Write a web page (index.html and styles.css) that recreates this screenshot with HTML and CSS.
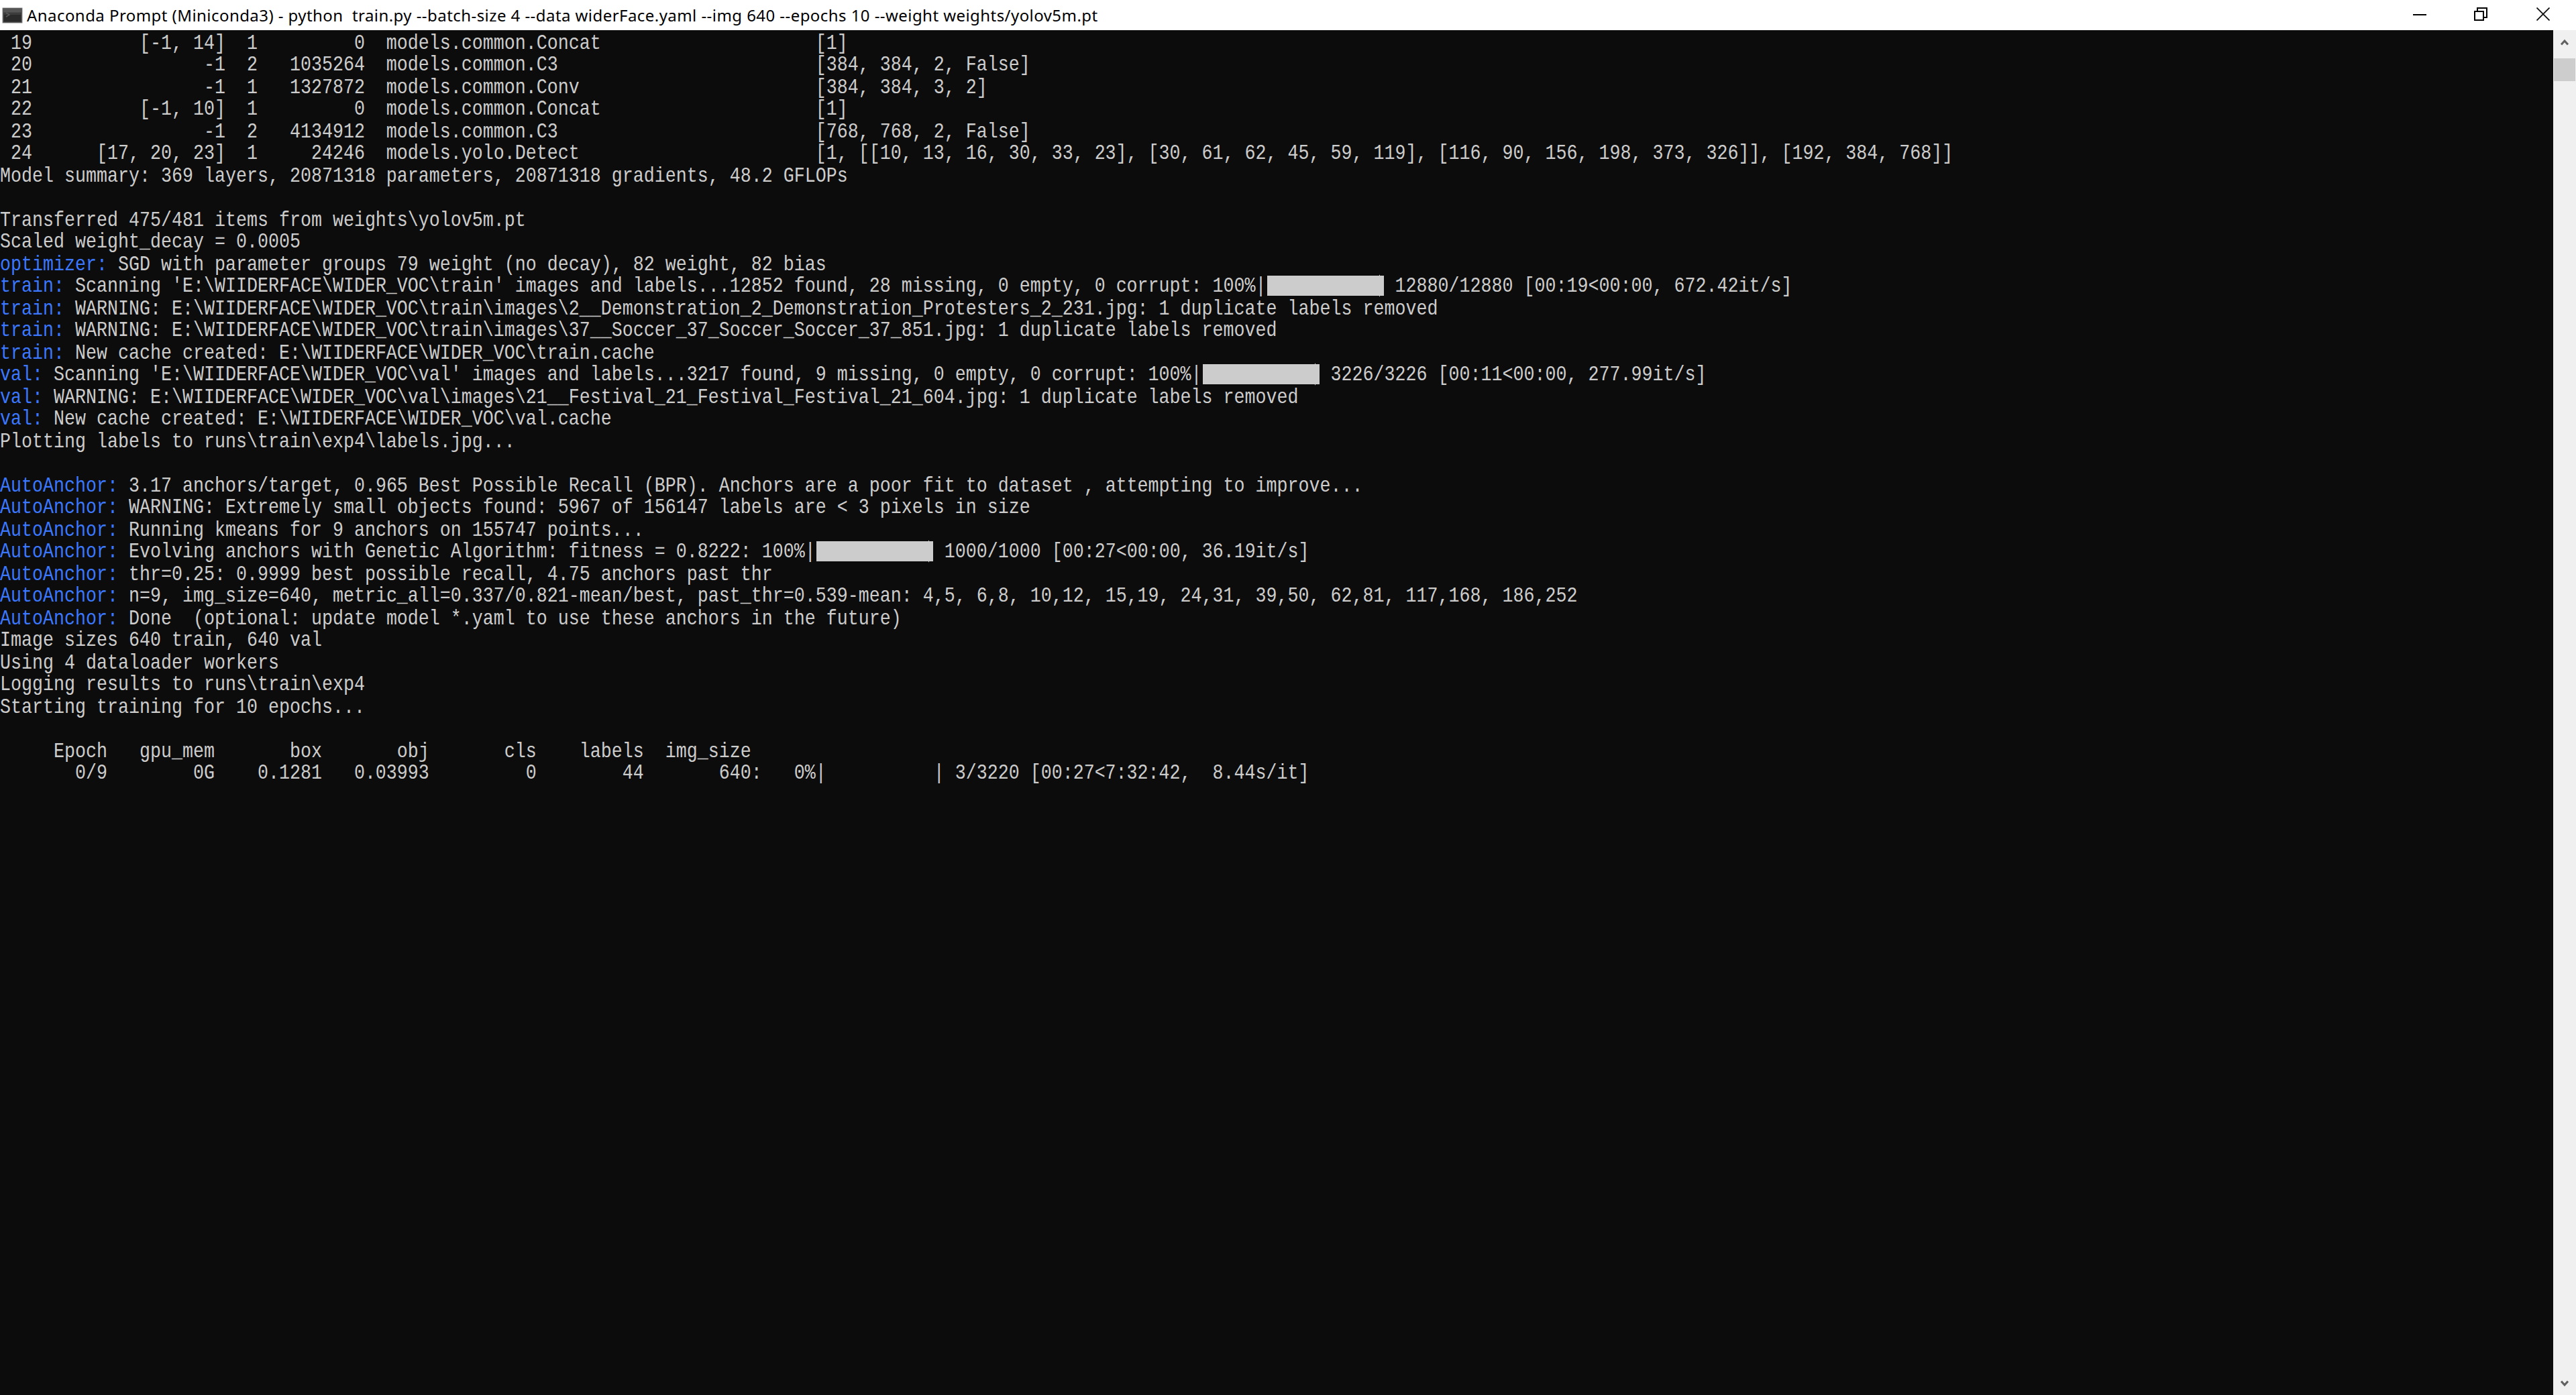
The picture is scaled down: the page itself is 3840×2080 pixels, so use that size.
FILE: index.html
```html
<!DOCTYPE html>
<html lang="en">
<head>
<meta charset="utf-8">
<title>Anaconda Prompt (Miniconda3)</title>
<link rel="stylesheet" href="styles.css">
</head>
<body>
<div class="window">
  <header class="titlebar">
    <svg class="app-icon" viewBox="0 0 31 24" aria-hidden="true">
      <rect x="0.5" y="0.5" width="30" height="23" fill="#8a8a8a"/>
      <rect x="1.5" y="1.5" width="28" height="21" fill="#3c3c3c"/>
      <rect x="1.5" y="1.5" width="28" height="6" fill="#565656"/>
      <rect x="3" y="11" width="25" height="10" fill="#2a2a2a"/>
      <path d="M6 8l5 3-5 3" fill="none" stroke="#5a5a5a" stroke-width="1.5"/>
    </svg>
    <span class="title">Anaconda Prompt (Miniconda3) - python  train.py --batch-size 4 --data widerFace.yaml --img 640 --epochs 10 --weight weights/yolov5m.pt</span>
    <div class="controls">
      <div class="ctl ctl-min"><svg class="ctl-icon" viewBox="0 0 20 20" aria-hidden="true"><path d="M0 11H20" stroke="#000" stroke-width="2"/></svg></div>
      <div class="ctl ctl-max"><svg class="ctl-icon" viewBox="0 0 20 20" aria-hidden="true"><rect x="1" y="6" width="13" height="13" fill="none" stroke="#000" stroke-width="2"/><path d="M5 5V1H19V15H15" fill="none" stroke="#000" stroke-width="2"/></svg></div>
      <div class="ctl ctl-close"><svg class="ctl-icon" viewBox="0 0 20 20" aria-hidden="true"><path d="M0.5 0.5L19.5 19.5M19.5 0.5L0.5 19.5" stroke="#111" stroke-width="1.8"/></svg></div>
    </div>
  </header>
  <div class="body">
    <main class="terminal">
      <div class="screen">
<div class="line"> 19          [-1, 14]  1         0  models.common.Concat                    [1]</div>
<div class="line"> 20                -1  2   1035264  models.common.C3                        [384, 384, 2, False]</div>
<div class="line"> 21                -1  1   1327872  models.common.Conv                      [384, 384, 3, 2]</div>
<div class="line"> 22          [-1, 10]  1         0  models.common.Concat                    [1]</div>
<div class="line"> 23                -1  2   4134912  models.common.C3                        [768, 768, 2, False]</div>
<div class="line"> 24      [17, 20, 23]  1     24246  models.yolo.Detect                      [1, [[10, 13, 16, 30, 33, 23], [30, 61, 62, 45, 59, 119], [116, 90, 156, 198, 373, 326]], [192, 384, 768]]</div>
<div class="line">Model summary: 369 layers, 20871318 parameters, 20871318 gradients, 48.2 GFLOPs</div>
<div class="line"> </div>
<div class="line">Transferred 475/481 items from weights\yolov5m.pt</div>
<div class="line">Scaled weight_decay = 0.0005</div>
<div class="line"><span class="tag">optimizer:</span> SGD with parameter groups 79 weight (no decay), 82 weight, 82 bias</div>
<div class="line"><span class="tag">train:</span> Scanning 'E:\WIIDERFACE\WIDER_VOC\train' images and labels...12852 found, 28 missing, 0 empty, 0 corrupt: 100%|<span class="bar"></span> 12880/12880 [00:19&lt;00:00, 672.42it/s]</div>
<div class="line"><span class="tag">train:</span> WARNING: E:\WIIDERFACE\WIDER_VOC\train\images\2__Demonstration_2_Demonstration_Protesters_2_231.jpg: 1 duplicate labels removed</div>
<div class="line"><span class="tag">train:</span> WARNING: E:\WIIDERFACE\WIDER_VOC\train\images\37__Soccer_37_Soccer_Soccer_37_851.jpg: 1 duplicate labels removed</div>
<div class="line"><span class="tag">train:</span> New cache created: E:\WIIDERFACE\WIDER_VOC\train.cache</div>
<div class="line"><span class="tag">val:</span> Scanning 'E:\WIIDERFACE\WIDER_VOC\val' images and labels...3217 found, 9 missing, 0 empty, 0 corrupt: 100%|<span class="bar"></span> 3226/3226 [00:11&lt;00:00, 277.99it/s]</div>
<div class="line"><span class="tag">val:</span> WARNING: E:\WIIDERFACE\WIDER_VOC\val\images\21__Festival_21_Festival_Festival_21_604.jpg: 1 duplicate labels removed</div>
<div class="line"><span class="tag">val:</span> New cache created: E:\WIIDERFACE\WIDER_VOC\val.cache</div>
<div class="line">Plotting labels to runs\train\exp4\labels.jpg...</div>
<div class="line"> </div>
<div class="line"><span class="tag">AutoAnchor:</span> 3.17 anchors/target, 0.965 Best Possible Recall (BPR). Anchors are a poor fit to dataset , attempting to improve...</div>
<div class="line"><span class="tag">AutoAnchor:</span> WARNING: Extremely small objects found: 5967 of 156147 labels are &lt; 3 pixels in size</div>
<div class="line"><span class="tag">AutoAnchor:</span> Running kmeans for 9 anchors on 155747 points...</div>
<div class="line"><span class="tag">AutoAnchor:</span> Evolving anchors with Genetic Algorithm: fitness = 0.8222: 100%|<span class="bar"></span> 1000/1000 [00:27&lt;00:00, 36.19it/s]</div>
<div class="line"><span class="tag">AutoAnchor:</span> thr=0.25: 0.9999 best possible recall, 4.75 anchors past thr</div>
<div class="line"><span class="tag">AutoAnchor:</span> n=9, img_size=640, metric_all=0.337/0.821-mean/best, past_thr=0.539-mean: 4,5, 6,8, 10,12, 15,19, 24,31, 39,50, 62,81, 117,168, 186,252</div>
<div class="line"><span class="tag">AutoAnchor:</span> Done  (optional: update model *.yaml to use these anchors in the future)</div>
<div class="line">Image sizes 640 train, 640 val</div>
<div class="line">Using 4 dataloader workers</div>
<div class="line">Logging results to runs\train\exp4</div>
<div class="line">Starting training for 10 epochs...</div>
<div class="line"> </div>
<div class="line">     Epoch   gpu_mem       box       obj       cls    labels  img_size</div>
<div class="line">       0/9        0G    0.1281   0.03993         0        44       640:   0%|          | 3/3220 [00:27&lt;7:32:42,  8.44s/it]</div>
      </div>
    </main>
    <aside class="scrollbar">
      <div class="sb-btn sb-up"><svg class="sb-arrow" viewBox="0 0 12 10" aria-hidden="true"><path d="M1 8.5L6 3L11 8.5" fill="none" stroke="#606060" stroke-width="3"/></svg></div>
      <div class="sb-thumb"></div>
      <div class="sb-track"></div>
      <div class="sb-btn sb-down"><svg class="sb-arrow" viewBox="0 0 12 10" aria-hidden="true"><path d="M1 1.5L6 7L11 1.5" fill="none" stroke="#606060" stroke-width="3"/></svg></div>
    </aside>
  </div>
</div>
</body>
</html>
```
FILE: styles.css
```css
html, body {
  margin: 0;
  padding: 0;
  width: 100%;
  height: 100%;
  overflow: hidden;
  background: #0c0c0c;
}

.window {
  display: flex;
  flex-direction: column;
  height: 100vh;
}

.titlebar {
  display: flex;
  align-items: center;
  flex: none;
  height: 45px;
  background: #fff;
  color: #000;
}

.app-icon {
  flex: none;
  width: 31px;
  height: 24px;
  margin: 0 6px 0 3px;
}

.title {
  flex: 1;
  font-family: "Noto Sans", "Open Sans", sans-serif;
  font-size: 24px;
  letter-spacing: 0.44px;
  line-height: 45px;
  white-space: pre;
}

.controls {
  display: flex;
  flex: none;
  margin-right: 1px;
}

.ctl {
  display: flex;
  align-items: center;
  justify-content: center;
  height: 45px;
}

.ctl-min { width: 92px; }
.ctl-max { width: 90px; }
.ctl-close { width: 96px; }

.ctl-icon {
  display: block;
  width: 20px;
  height: 20px;
  margin-top: -3px;
}

.body {
  display: flex;
  flex: 1;
  min-height: 0;
}

.terminal {
  flex: 1;
  min-width: 0;
  overflow: hidden;
  background: #0c0c0c;
}

.screen {
  padding-top: 2.5px;
  font-family: "Liberation Mono", monospace;
  font-size: 26.667px;
  line-height: 27.5px;
  color: #cccccc;
  transform: scaleY(1.2);
  transform-origin: 0 0;
}

.line {
  height: 27.5px;
  white-space: pre;
}

.tag {
  color: #3b78ff;
}

.bar {
  position: relative;
  display: inline-block;
  width: 174px;
  height: 25px;
  margin: 0 1px;
  vertical-align: top;
  background: #cccccc;
}

.bar::after {
  content: "";
  position: absolute;
  top: -1px;
  left: 167px;
  width: 1px;
  height: 27px;
  background: #cccccc;
}

.scrollbar {
  display: flex;
  flex: none;
  flex-direction: column;
  align-items: center;
  width: 34px;
  background: #f0f0f0;
}

.sb-btn {
  display: flex;
  flex: none;
  justify-content: center;
  box-sizing: border-box;
  width: 100%;
  height: 42px;
}

.sb-up {
  align-items: flex-start;
  padding-top: 13px;
}

.sb-down {
  align-items: flex-end;
  padding-bottom: 12px;
}

.sb-arrow {
  display: block;
  width: 12px;
  height: 10px;
}

.sb-thumb {
  flex: none;
  width: 32px;
  height: 34px;
  background: #cdcdcd;
}

.sb-track {
  flex: 1;
}
```
